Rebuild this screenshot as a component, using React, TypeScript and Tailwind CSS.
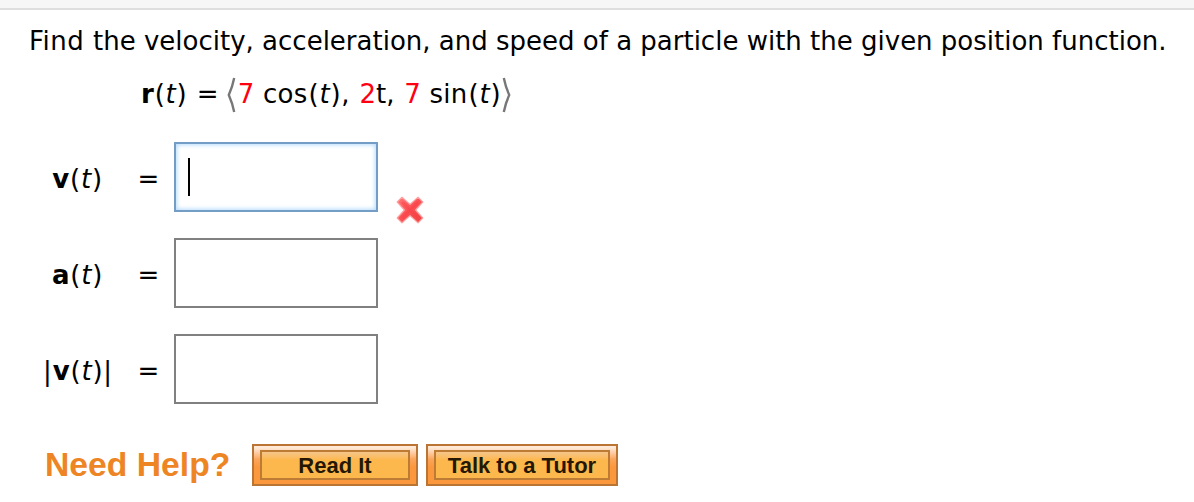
import type { ReactNode } from "react";

function Angle({ side }: { side: "left" | "right" }) {
  return (
    <svg width="9" height="36" viewBox="0 0 9 36" fill="none" stroke="#777" strokeWidth="2.4" className="shrink-0">
      <path d={side === "left" ? "M7.2 1C6 7 4.5 12 1.8 18C4.5 24 6 29 7.2 35" : "M1.8 1C3 7 4.5 12 7.2 18C4.5 24 3 29 1.8 35"} />
    </svg>
  );
}

function Cross() {
  return (
    <svg width="28" height="28" viewBox="0 0 28 28" className="shrink-0">
      <defs>
        <linearGradient id="cross" x1="0" y1="0" x2="1" y2="1">
          <stop offset="0" stopColor="#ff7878" />
          <stop offset="0.5" stopColor="#fb5055" />
          <stop offset="1" stopColor="#f04040" />
        </linearGradient>
      </defs>
      <path
        d="M6 1.2 L14 8.4 L22 1.2 L26.8 6 L19.6 14 L26.8 22 L22 26.8 L14 19.6 L6 26.8 L1.2 22 L8.4 14 L1.2 6 Z"
        fill="url(#cross)"
        stroke="#ffa0a0"
        strokeWidth="1.2"
        strokeLinejoin="round"
      />
      <path d="M7 7L21 21M21 7L7 21" stroke="#f5383f" strokeOpacity="0.35" strokeWidth="3" strokeLinecap="round" />
    </svg>
  );
}

function OfT() {
  return (
    <>
      <span className="px-[0.8px]">(</span>
      <i>t</i>
      <span className="px-[0.8px]">)</span>
    </>
  );
}

function Row({ label, active = false, children }: { label: ReactNode; active?: boolean; children?: ReactNode }) {
  return (
    <div className="flex h-[70px]">
      <div className="flex h-[74px] w-[87px] items-center justify-center whitespace-nowrap">{label}</div>
      <div className="flex h-[74px] w-[53px] items-center pl-[16.5px]">=</div>
      <div
        className={
          active
            ? "flex h-[70px] w-[204px] items-center border-2 border-[#739dc5] bg-white pl-[12px] shadow-[inset_0_0_4px_1px_#b5dafc]"
            : "h-[70px] w-[204px] border-2 border-[#808080] bg-white"
        }
      >
        {active && <span className="h-[38px] w-[2px] bg-black" />}
      </div>
      {children}
    </div>
  );
}

function HelpButton({ width, children }: { width: string; children: ReactNode }) {
  return (
    <button
      className={`${width} h-[42px] border-2 border-[#ba7535] bg-linear-to-b from-[#ffe8d5] from-5% via-[#fba55a] via-35% to-[#fb983d] to-55% px-[6px] pt-[4px] pb-[4px] font-['Liberation_Sans',sans-serif] text-[22px] font-bold text-[#241805]`}
    >
      <span className="flex h-[30px] w-full items-center justify-center whitespace-nowrap border-2 border-[#bd7b33] bg-linear-to-b from-[#f6c58a] to-[#fdb84d] to-30% pt-[2px] leading-[28px]">
        {children}
      </span>
    </button>
  );
}

export default function App() {
  return (
    <main className="flex h-[502px] w-full flex-col overflow-hidden bg-white font-['DejaVu_Sans',Verdana,sans-serif] text-[26px] leading-[32px] text-black">
      <div className="h-[10px] shrink-0 border-b-2 border-[#dedede] bg-[#f6f6f6]" />
      <p className="mt-[15px] pl-[29px] whitespace-nowrap">
        <span className="tracking-[0.5px]">Find </span>
        the velocity, acceleration, and speed of a particle with the given position function.
      </p>
      <div className="mt-[20px] flex h-[36px] items-center whitespace-pre pl-[141px]">
        <span className="mb-[2px]"><b>r</b><OfT /><span className="ml-[1px]"> = </span></span>
        <span className="mr-[2px] flex"><Angle side="left" /></span>
        <span className="mb-[2px]">
          <span className="text-[#ff0012]">7</span><span className="tracking-[0.3px]"> cos</span><OfT /><span className="tracking-[0.8px]">, </span><span className="text-[#ff0012]">2</span>t<span className="tracking-[0.8px]">, </span><span className="text-[#ff0012]">7</span><span className="tracking-[0.3px]"> sin</span><OfT />
        </span>
        <span className="ml-px flex"><Angle side="right" /></span>
      </div>
      <div className="mt-[29px] flex flex-col gap-[26px] pl-[34px]">
        <Row label={<span><b>v</b><OfT /></span>} active>
          <div className="mt-[54px] ml-[18px]"><Cross /></div>
        </Row>
        <Row label={<span><b>a</b><OfT /></span>} />
        <Row label={<span><span className="mr-[1px]">|</span><b>v</b><OfT />|</span>} />
      </div>
      <div className="mt-[40px] flex h-[42px] items-center pl-[45px]">
        <span className="mb-[2px] w-[207px] whitespace-nowrap font-['Liberation_Sans',sans-serif] text-[33.7px] font-bold text-[#ee8525]">Need Help?</span>
        <HelpButton width="w-[166px]">Read It</HelpButton>
        <div className="w-[8px]" />
        <HelpButton width="w-[192px]">Talk to a Tutor</HelpButton>
      </div>
    </main>
  );
}
